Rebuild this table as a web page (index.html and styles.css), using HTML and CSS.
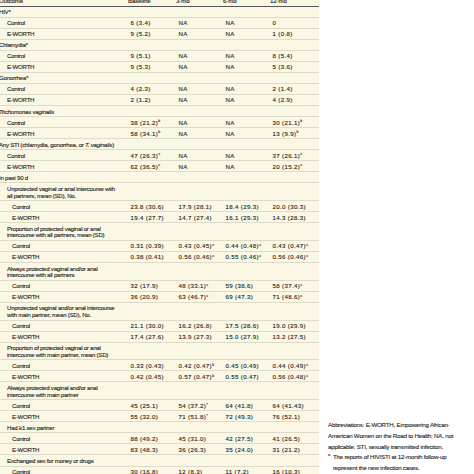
FILE: index.html
```html
<!DOCTYPE html>
<html>
<head>
<meta charset="utf-8">
<link rel="stylesheet" href="styles.css">
</head>
<body>
<div class="page">
  <div class="table-wrap">
    <table class="data">
      <colgroup>
        <col class="c-label"><col class="c-b"><col class="c-3"><col class="c-6"><col class="c-12">
      </colgroup>
      <thead>
        <tr><th class="lbl">Outcome</th><th>Baseline</th><th>3-mo</th><th>6-mo</th><th>12-mo</th></tr>
      </thead>
      <tbody>
        <tr><td class="l0" colspan="5">HIV<sup>a</sup></td></tr>
        <tr><td class="l1">Control</td><td>6 (3.4)</td><td>NA</td><td>NA</td><td>0</td></tr>
        <tr><td class="l1">E-WORTH</td><td>9 (5.2)</td><td>NA</td><td>NA</td><td>1 (0.8)</td></tr>
        <tr><td class="l0" colspan="5">Chlamydia<sup>a</sup></td></tr>
        <tr><td class="l1">Control</td><td>9 (5.1)</td><td>NA</td><td>NA</td><td>8 (5.4)</td></tr>
        <tr><td class="l1">E-WORTH</td><td>9 (5.3)</td><td>NA</td><td>NA</td><td>5 (3.6)</td></tr>
        <tr><td class="l0" colspan="5">Gonorrhea<sup>a</sup></td></tr>
        <tr><td class="l1">Control</td><td>4 (2.3)</td><td>NA</td><td>NA</td><td>2 (1.4)</td></tr>
        <tr><td class="l1">E-WORTH</td><td>2 (1.2)</td><td>NA</td><td>NA</td><td>4 (2.9)</td></tr>
        <tr><td class="l0" colspan="5"><i>Trichomonas vaginalis</i></td></tr>
        <tr><td class="l1">Control</td><td>38 (21.2)<sup>b</sup></td><td>NA</td><td>NA</td><td>30 (21.1)<sup>b</sup></td></tr>
        <tr><td class="l1">E-WORTH</td><td>58 (34.1)<sup>b</sup></td><td>NA</td><td>NA</td><td>13 (9.9)<sup>b</sup></td></tr>
        <tr><td class="l0" colspan="5">Any STI (chlamydia, gonorrhea, or <i>T. vaginalis</i>)</td></tr>
        <tr><td class="l1">Control</td><td>47 (26.3)<sup>c</sup></td><td>NA</td><td>NA</td><td>37 (26.1)<sup>c</sup></td></tr>
        <tr><td class="l1">E-WORTH</td><td>62 (36.5)<sup>c</sup></td><td>NA</td><td>NA</td><td>20 (15.2)<sup>c</sup></td></tr>
        <tr><td class="l0" colspan="5">In past 90 d</td></tr>
        <tr><td class="l1" colspan="5">Unprotected vaginal or anal intercourse with<br>all partners, mean (SD), No.</td></tr>
        <tr><td class="l2">Control</td><td>23.8 (30.6)</td><td>17.9 (28.1)</td><td>18.4 (29.3)</td><td>20.0 (30.3)</td></tr>
        <tr><td class="l2">E-WORTH</td><td>19.4 (27.7)</td><td>14.7 (27.4)</td><td>16.1 (29.3)</td><td>14.3 (28.3)</td></tr>
        <tr><td class="l1" colspan="5">Proportion of protected vaginal or anal<br>intercourse with all partners, mean (SD)</td></tr>
        <tr><td class="l2">Control</td><td>0.31 (0.39)</td><td>0.43 (0.45)<sup>c</sup></td><td>0.44 (0.48)<sup>c</sup></td><td>0.43 (0.47)<sup>c</sup></td></tr>
        <tr><td class="l2">E-WORTH</td><td>0.38 (0.41)</td><td>0.56 (0.46)<sup>c</sup></td><td>0.55 (0.46)<sup>c</sup></td><td>0.56 (0.46)<sup>c</sup></td></tr>
        <tr><td class="l1" colspan="5">Always protected vaginal and/or anal<br>intercourse with all partners</td></tr>
        <tr><td class="l2">Control</td><td>32 (17.9)</td><td>48 (33.1)<sup>c</sup></td><td>59 (38.6)</td><td>58 (37.4)<sup>c</sup></td></tr>
        <tr><td class="l2">E-WORTH</td><td>36 (20.9)</td><td>63 (46.7)<sup>c</sup></td><td>69 (47.3)</td><td>71 (48.6)<sup>c</sup></td></tr>
        <tr><td class="l1" colspan="5">Unprotected vaginal and/or anal intercourse<br>with main partner, mean (SD), No.</td></tr>
        <tr><td class="l2">Control</td><td>21.1 (30.0)</td><td>16.2 (26.8)</td><td>17.5 (28.6)</td><td>19.0 (29.9)</td></tr>
        <tr><td class="l2">E-WORTH</td><td>17.4 (27.6)</td><td>13.9 (27.3)</td><td>15.0 (27.9)</td><td>13.2 (27.5)</td></tr>
        <tr><td class="l1" colspan="5">Proportion of protected vaginal or anal<br>intercourse with main partner, mean (SD)</td></tr>
        <tr><td class="l2">Control</td><td>0.33 (0.43)</td><td>0.42 (0.47)<sup>b</sup></td><td>0.45 (0.49)</td><td>0.44 (0.49)<sup>c</sup></td></tr>
        <tr><td class="l2">E-WORTH</td><td>0.42 (0.45)</td><td>0.57 (0.47)<sup>b</sup></td><td>0.55 (0.47)</td><td>0.56 (0.48)<sup>c</sup></td></tr>
        <tr><td class="l1" colspan="5">Always protected vaginal and/or anal<br>intercourse with main partner</td></tr>
        <tr><td class="l2">Control</td><td>45 (25.1)</td><td>54 (37.2)<sup>*</sup></td><td>64 (41.8)</td><td>64 (41.43)</td></tr>
        <tr><td class="l2">E-WORTH</td><td>55 (32.0)</td><td>71 (51.8)<sup>*</sup></td><td>72 (49.3)</td><td>76 (52.1)</td></tr>
        <tr><td class="l1" colspan="5">Had ≥1 sex partner</td></tr>
        <tr><td class="l2">Control</td><td>88 (49.2)</td><td>45 (31.0)</td><td>42 (27.5)</td><td>41 (26.5)</td></tr>
        <tr><td class="l2">E-WORTH</td><td>83 (48.3)</td><td>36 (26.3)</td><td>35 (24.0)</td><td>31 (21.2)</td></tr>
        <tr><td class="l1" colspan="5">Exchanged sex for money or drugs</td></tr>
        <tr><td class="l2">Control</td><td>30 (16.8)</td><td>12 (8.3)</td><td>11 (7.2)</td><td>16 (10.3)</td></tr>
      </tbody>
    </table>
  </div>
  <div class="notes">
    <p>Abbreviations: E-WORTH, Empowering African-<br>American Women on the Road to Health; NA, not<br>applicable; STI, sexually transmitted infection.</p>
    <p class="fn"><span class="mark">a</span>The reports of HIV/STI at 12-month follow-up<br>represent the new infection cases.</p>
    <p class="fn"><span class="mark">b</span><i>P</i> ≤ .01 by 2-tailed <i>t</i> test or χ<sup>2</sup> test between 2 groups.</p>
  </div>
</div>
</body>
</html>
```

FILE: styles.css
```css
html, body {
  margin: 0;
  padding: 0;
  background: #ffffff;
}
body {
  width: 474px;
  height: 474px;
  overflow: hidden;
  font-family: "Liberation Sans", Arial, sans-serif;
  color: #1f1f1f;
}
.page {
  display: flex;
  align-items: flex-start;
}
.table-wrap {
  width: 320px;
  flex: 0 0 320px;
  margin-left: -1px;
  margin-top: -4.5px;
  background: #faf7e4;
}
.data {
  width: 320px;
  table-layout: fixed;
  border-collapse: collapse;
  font-size: 6.1px;
  line-height: 6.8px;
  -webkit-text-stroke: 0.12px currentColor;
}
.c-label { width: 129px; }
.c-b { width: 48px; }
.c-3 { width: 47px; }
.c-6 { width: 47px; }
.c-12 { width: 49px; }
.data th {
  text-align: left;
  font-weight: normal;
  color: #1a1a1a;
  padding: 2.7px 0 0.55px 0;
  border-bottom: 1.3px solid #555555;
  white-space: nowrap;
  letter-spacing: -0.1px;
}
.data td {
  padding: 2.7px 0 0.55px 2.5px;
  border-bottom: 1px solid #dedbc9;
  white-space: nowrap;
  vertical-align: top;
  letter-spacing: 0.35px;
}
.data td.l0,
.data td.l1,
.data td.l2 {
  letter-spacing: -0.25px;
}
.data td.l0 { padding-left: 0; }
.data td.l1 { padding-left: 8px; }
.data td.l2 { padding-left: 13px; }
.data sup {
  font-size: 3.6px;
  line-height: 0;
  vertical-align: 2.2px;
  margin-left: 0.3px;
  letter-spacing: 0;
}
.notes {
  margin-top: 420px;
  padding-left: 9px;
  font-size: 6.2px;
  line-height: 10.8px;
  letter-spacing: -0.22px;
  color: #222222;
  white-space: nowrap;
  -webkit-text-stroke: 0.1px currentColor;
}
.notes p {
  margin: 0;
}
.notes .fn {
  position: relative;
  padding-left: 5px;
}
.notes .fn .mark {
  position: absolute;
  left: 0;
  top: -2px;
  font-size: 4px;
}
.notes sup {
  font-size: 3.8px;
  line-height: 0;
}
```
